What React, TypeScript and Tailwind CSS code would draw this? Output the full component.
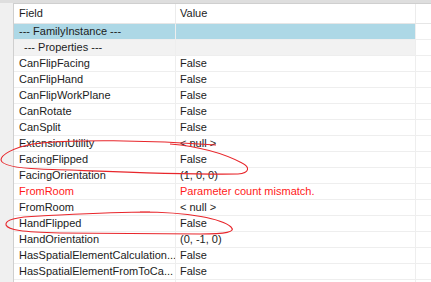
import React from "react";

type Row = { field: string; value: string; kind?: "group" | "section" | "error" };

const rows: Row[] = [
  { field: "--- FamilyInstance ---", value: "", kind: "group" },
  { field: "--- Properties ---", value: "", kind: "section" },
  { field: "CanFlipFacing", value: "False" },
  { field: "CanFlipHand", value: "False" },
  { field: "CanFlipWorkPlane", value: "False" },
  { field: "CanRotate", value: "False" },
  { field: "CanSplit", value: "False" },
  { field: "ExtensionUtility", value: "< null >" },
  { field: "FacingFlipped", value: "False" },
  { field: "FacingOrientation", value: "(1, 0, 0)" },
  { field: "FromRoom", value: "Parameter count mismatch.", kind: "error" },
  { field: "FromRoom", value: "< null >" },
  { field: "HandFlipped", value: "False" },
  { field: "HandOrientation", value: "(0, -1, 0)" },
  { field: "HasSpatialElementCalculation...", value: "False" },
  { field: "HasSpatialElementFromToCa...", value: "False" },
  { field: "", value: "" },
];

export default function App() {
  return (
    <div
      className="relative w-[431px] h-[282px] overflow-hidden bg-[#f0f0f0] text-[11px] text-[#1c1c1c]"
      style={{ fontFamily: '"Liberation Sans", Arial, sans-serif' }}
    >
      <div className="h-[3px] bg-[#dedede]" />
      <div className="ml-[13px] border-l border-t border-[#cfcfcf] bg-white">
        {/* header */}
        <div className="flex h-[20px] border-b border-[#e6e6e6]">
          <div className="w-[162px] border-r border-[#ececec] pl-[5px] flex items-center">Field</div>
          <div className="w-[240px] border-r border-[#ececec] pl-[4px] flex items-center">Value</div>
          <div className="flex-1" />
        </div>
        {rows.map((r, i) => {
          const bg =
            r.kind === "group" ? "bg-[#add8e6]" : r.kind === "section" ? "bg-[#f2f2f2]" : "bg-white";
          const text = r.kind === "error" ? "text-[#ff1a1a]" : "";
          return (
            <div key={i} className="flex h-[16px] border-b border-[#eeeeee]">
              <div
                className={`w-[162px] border-r border-[#eeeeee] flex items-center whitespace-nowrap overflow-hidden ${bg} ${text} ${
                  r.kind === "section" ? "pl-[10px]" : "pl-[5px]"
                }`}
              >
                {r.field}
              </div>
              <div
                className={`w-[240px] border-r border-[#eeeeee] pl-[4px] flex items-center whitespace-nowrap ${bg} ${text}`}
              >
                {r.value}
              </div>
              <div className="flex-1" />
            </div>
          );
        })}
      </div>

      {/* red annotation marks */}
      <svg className="absolute left-0 top-0 pointer-events-none" width="431" height="282" fill="none">
        <path
          d="M216 145 C150 140 70 139 33 144 C12 148 1 155 1 160 C2 165 14 168 40 169 C100 171 180 175 238 174 C250 173 250 167 242 163 C225 154 205 147 170 144"
          stroke="#e8262b"
          strokeWidth="1.1"
        />
        <path
          d="M140 212 C190 212 222 219 231 227 C236 232 226 234 200 234 L60 233 C22 232 8 230 6 225 C5 220 15 217 40 216 C80 214 110 212 150 212"
          stroke="#e8262b"
          strokeWidth="1.1"
        />
      </svg>
    </div>
  );
}
